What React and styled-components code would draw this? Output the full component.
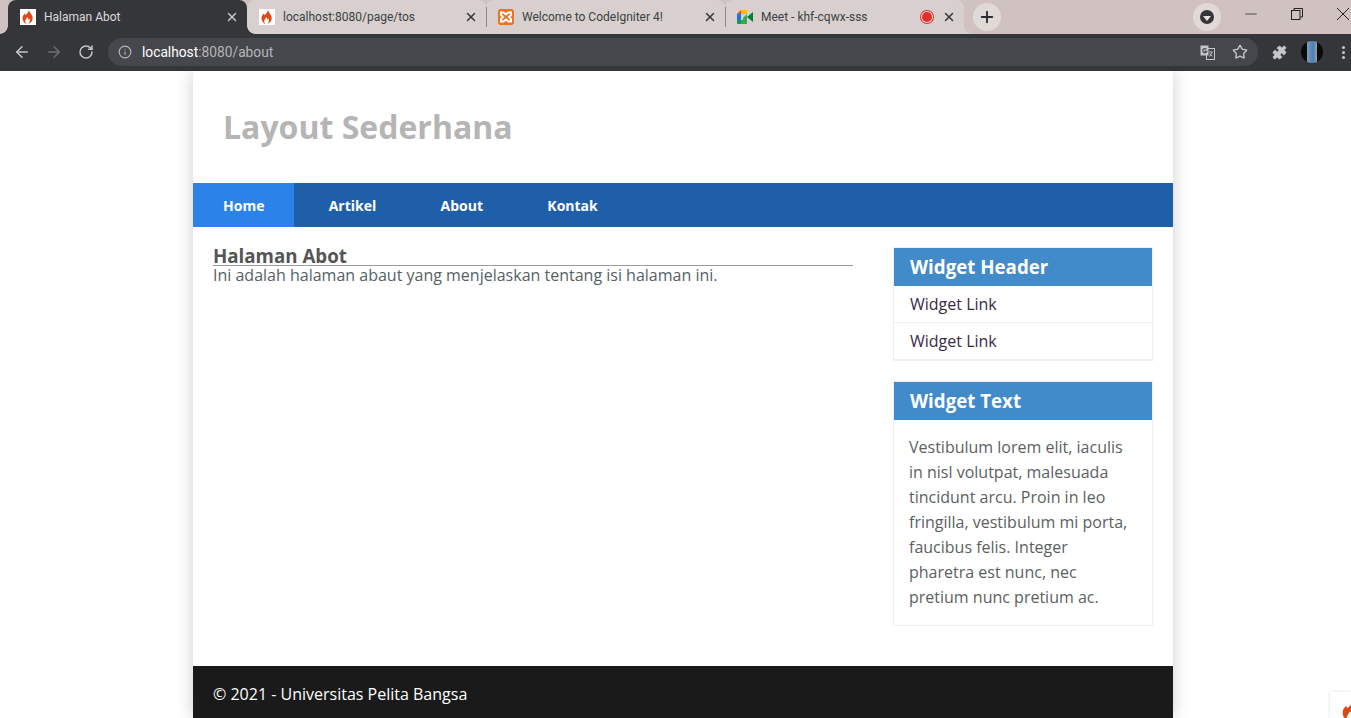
import React from "react";
import styled, { createGlobalStyle } from "styled-components";
import { ArrowLeft, ArrowRight, RotateCw, Info, Star, X, Plus, Minus, Puzzle } from "lucide-react";

const GlobalStyle = createGlobalStyle`
  html, body {
    margin: 0;
    padding: 0;
    height: 100%;
    overflow: hidden;
    background: #fff;
    font-family: "Open Sans", sans-serif;
  }
  * { box-sizing: border-box; }
`;

const Window = styled.div`
  position: relative;
  width: 1351px;
  height: 718px;
  overflow: hidden;
  display: flex;
  flex-direction: column;
`;

const TabStrip = styled.div`
  height: 34px;
  flex: none;
  display: flex;
  align-items: flex-end;
  padding-left: 8px;
  background: #cfc2c1;
`;

const Tab = styled.div`
  position: relative;
  z-index: ${(p) => (p.$active ? 2 : 0)};
  width: 239px;
  height: 34px;
  flex: none;
  display: flex;
  align-items: center;
  padding: 0 8px 0 12px;
  gap: 8px;
  border-radius: 8px 8px 0 0;
  background: ${(p) => (p.$active ? "#35363a" : "#d8d0ce")};
  color: ${(p) => (p.$active ? "#dcdcdc" : "#3c4043")};
  font-family: "Roboto", "Liberation Sans", sans-serif;
  font-size: 12px;

  &::after {
    content: "";
    position: absolute;
    right: -8px;
    bottom: 0;
    width: 8px;
    height: 8px;
    background: radial-gradient(circle at 100% 0, transparent 7.5px, ${(p) => (p.$active ? "#35363a" : "#d8d0ce")} 8px);
  }

  &::before {
    content: "";
    display: ${(p) => (p.$active ? "block" : "none")};
    position: absolute;
    left: -8px;
    bottom: 0;
    width: 8px;
    height: 8px;
    background: radial-gradient(circle at 0 0, transparent 7.5px, #35363a 8px);
  }
`;

const TabTitle = styled.span`
  flex: 1;
  white-space: nowrap;
`;

const TabDivider = styled.div`
  width: 1px;
  height: 20px;
  flex: none;
  z-index: 1;
  align-self: center;
  margin-right: -1px;
  background: #8f8a8a;
`;

const Favicon = styled.span`
  width: 16px;
  height: 16px;
  flex: none;
  display: flex;
  align-items: center;
  justify-content: center;
  background: ${(p) => p.$bg || "#fff"};
`;

const RecordDot = styled.span`
  width: 10px;
  height: 10px;
  flex: none;
  margin-right: 2px;
  border-radius: 50%;
  background: #e0302a;
  box-shadow: 0 0 0 1px #f3dedd, 0 0 0 2px #e0302a;
`;

const NewTab = styled.div`
  position: relative;
  z-index: 1;
  width: 28px;
  height: 28px;
  flex: none;
  margin: 0 0 3px 9px;
  border-radius: 50%;
  background: #e0d9d8;
  color: #2b2c30;
  display: flex;
  align-items: center;
  justify-content: center;
`;

const ProfileDrop = styled.div`
  width: 28px;
  height: 28px;
  flex: none;
  margin: 0 0 3px 192px;
  border-radius: 50%;
  background: #e0d9d8;
  display: flex;
  align-items: center;
  justify-content: center;
`;

const DropInner = styled.div`
  width: 14px;
  height: 14px;
  border-radius: 50%;
  background: #35363a;
  display: flex;
  align-items: center;
  justify-content: center;
  &::after {
    content: "";
    border-left: 4px solid transparent;
    border-right: 4px solid transparent;
    border-top: 5px solid #e8e3e3;
    margin-top: 2px;
  }
`;

const WindowButtons = styled.div`
  display: flex;
  align-self: flex-start;
  margin-left: 7px;
  color: #222;
`;

const WindowButton = styled.div`
  width: 46px;
  height: 28px;
  flex: none;
  display: flex;
  align-items: center;
  justify-content: center;
`;

const Toolbar = styled.div`
  height: 37px;
  flex: none;
  display: flex;
  align-items: center;
  background: #35363a;
  color: #c4c6ca;
  padding: 0 0 1px 9px;
`;

const NavIcon = styled.span`
  width: 26px;
  flex: none;
  margin-right: 6px;
  display: flex;
  justify-content: center;
  color: ${(p) => p.$color || "#c4c6ca"};
`;

const Omnibox = styled.div`
  width: 1150px;
  height: 28px;
  margin-left: 3px;
  flex: none;
  display: flex;
  align-items: center;
  padding: 0 10px;
  border-radius: 14px;
  background: #45474c;
  font-family: "Roboto", "Liberation Sans", sans-serif;
  font-size: 13.75px;
  color: #b4b6ba;
`;

const Url = styled.div`
  flex: 1;
  margin-left: 10px;
  b {
    font-weight: 400;
    color: #fff;
  }
`;

const OmniIcon = styled.span`
  display: flex;
  flex: none;
  margin-left: ${(p) => p.$gap || 14}px;
  color: #c4c6ca;
`;

const Avatar = styled.div`
  width: 22px;
  height: 22px;
  flex: none;
  margin: 0 19px 0 14px;
  border-radius: 50%;
  background: linear-gradient(90deg, #0a0a0a 28%, #7f9fb0 28%, #4d7bc0 55%, #8fa58e 72%, #0a0a0a 72%);
`;

const MoreDots = styled.div`
  width: 3px;
  height: 3px;
  flex: none;
  border-radius: 50%;
  background: #c4c6ca;
  box-shadow: 0 -5px 0 #c4c6ca, 0 5px 0 #c4c6ca;
`;

const Viewport = styled.div`
  flex: 1;
  overflow: hidden;
  background: #fff;
`;

const Container = styled.div`
  width: 980px;
  margin-left: 193px;
  height: 647px;
  display: flex;
  flex-direction: column;
  background: #fff;
  box-shadow: 0 0 16px rgba(0, 0, 0, 0.2);
`;

const Header = styled.header`
  height: 112px;
  flex: none;
  padding: 33px 30px 0;
`;

const SiteTitle = styled.h1`
  margin: 0;
  font-size: 32px;
  line-height: 46px;
  font-weight: 700;
  color: #b5b5b5;
`;

const Nav = styled.nav`
  height: 44px;
  flex: none;
  display: flex;
  gap: 4.3px;
  background: #1f5faa;
`;

const NavLink = styled.a`
  padding: 0 30px;
  display: flex;
  align-items: center;
  font-size: 14px;
  font-weight: 700;
  color: #fff;
  background: ${(p) => (p.$active ? "#2b83ea" : "transparent")};
`;

const Body = styled.div`
  flex: 1;
  display: flex;
  justify-content: space-between;
  padding: 20px 20px 0;
`;

const Main = styled.main`
  width: 640px;
`;

const PageTitle = styled.h2`
  margin: 0;
  font-size: 18.72px;
  line-height: 18px;
  font-weight: 700;
  color: #555;
  border-bottom: 1px solid #999;
`;

const PageText = styled.p`
  margin: 0;
  font-size: 16px;
  line-height: 18px;
  color: #555f66;
`;

const Aside = styled.aside`
  width: 260px;
  display: flex;
  flex-direction: column;
  gap: 20px;
`;

const Widget = styled.section`
  border: 1px solid #eee;
  border-bottom-width: ${(p) => p.$bottom || 1}px;
`;

const WidgetHead = styled.h3`
  margin: 0;
  height: 38px;
  padding: 0 16px 2px;
  display: flex;
  align-items: center;
  background: #428bca;
  color: #fff;
  font-size: 18.72px;
  font-weight: 700;
`;

const WidgetLink = styled.a`
  display: flex;
  align-items: center;
  height: 36px;
  padding: 0 16px;
  font-size: 16px;
  color: #3b2a45;
  & + & {
    height: 37px;
    border-top: 1px solid #eee;
  }
`;

const WidgetBody = styled.p`
  margin: 0;
  padding: 15px;
  font-size: 16px;
  line-height: 25px;
  color: #5c5f62;
`;

const Footer = styled.footer`
  height: 52px;
  flex: none;
  padding: 4px 20px 0;
  display: flex;
  align-items: center;
  background: #1a1a1a;
  color: #fff;
  font-size: 16px;
`;

const DebugToggle = styled.div`
  position: absolute;
  left: 1330px;
  top: 692px;
  width: 21px;
  height: 26px;
  overflow: hidden;
  padding: 7px 0 0 9px;
  background: #fff;
  box-shadow: 0 0 3px rgba(0, 0, 0, 0.15);
`;

const Flame = ({ size = 16 }) => (
  <svg width={size} height={size} viewBox="0 0 16 16" style={{ flex: "none" }}>
    <path
      fill="#dd4814"
      d="M8.600 0.600c.5 2.400-1 3.600-2.400 5C5.400 6.300 4.800 5.600 5 4.400 3.300 5.700 2.300 7.500 2.500 9.600c.2 2.900 2.300 4.900 4.300 5.700-1.200-1-1.900-2.400-1.500-3.700.3-1.200 1.500-2 2-3.500 1 1 1.100 1.900 1 2.600.7-.2 1.100-.8 1.200-1.500.8 1.700.5 4.200-1.300 5.700 2.400-.7 4.500-2.700 4.500-5.600 0-3.300-2.900-5.300-4.100-8.700z"
    />
  </svg>
);

const XamppIcon = () => (
  <svg width="16" height="16" viewBox="0 0 16 16">
    <rect width="16" height="16" rx="2" fill="#e8742a" />
    <path
      fill="none"
      stroke="#fff"
      strokeWidth="2"
      d="M3 3.500h2.500L8 5.500l2.500-2h2.500V6L11 8l2 2v2.500h-2.500L8 10.500l-2.500 2H3V10l2-2-2-2z"
    />
  </svg>
);

const MeetIcon = () => (
  <svg width="16" height="14" viewBox="0 0 16 14">
    <path fill="#fbbc04" d="M4 0h6v4H4z" />
    <path fill="#ea4335" d="M4 0v4H0z" />
    <path fill="#1a73e8" d="M0 4h4v6H0z" />
    <path fill="#0f9d58" d="M0 10h4v4H1a1 1 0 0 1-1-1z" />
    <path fill="#34a853" d="M4 10h6v4H4zM10 4v6H6V8z" />
    <path fill="#00832d" d="M10 7l6-5v10z" />
  </svg>
);

const TranslateIcon = () => (
  <svg width="15" height="15" viewBox="0 0 15 15">
    <rect x="0.500" y="0.500" width="8" height="10" fill="#c4c6ca" />
    <rect x="6.500" y="3.500" width="8" height="11" fill="none" stroke="#c4c6ca" />
    <path stroke="#45474c" strokeWidth="1.200" fill="none" d="M6.300 4.300a2 2 0 1 0 .4 2H4.600" />
    <path stroke="#c4c6ca" fill="none" d="M9 7h3.500M12 7c-.4 2-1.400 3.400-2.800 4.300M9.800 8.500c.5 1.100 1.400 2.100 2.500 2.700" />
  </svg>
);

const RestoreIcon = () => (
  <svg width="12" height="12" viewBox="0 0 12 12" fill="none" stroke="#222">
    <rect x="0.500" y="2.500" width="8.500" height="9" />
    <path d="M3 2.500V.5h8.500V9H9" />
  </svg>
);

const CloseThin = () => (
  <svg width="14" height="14" viewBox="0 0 14 14" stroke="#222" fill="none">
    <path d="M1 1l12 12M13 1L1 13" />
  </svg>
);

const links = ["Home", "Artikel", "About", "Kontak"];

export default function App() {
  return (
    <Window>
      <GlobalStyle />
      <TabStrip>
        <Tab $active>
          <Favicon><Flame /></Favicon>
          <TabTitle>Halaman Abot</TabTitle>
          <X size={14} strokeWidth={2.5} color="#c4c6ca" />
        </Tab>
        <Tab>
          <Favicon><Flame /></Favicon>
          <TabTitle>localhost:8080/page/tos</TabTitle>
          <X size={14} strokeWidth={2.5} color="#35363a" />
        </Tab>
        <TabDivider />
        <Tab>
          <Favicon><XamppIcon /></Favicon>
          <TabTitle>Welcome to CodeIgniter 4!</TabTitle>
          <X size={14} strokeWidth={2.5} color="#35363a" />
        </Tab>
        <TabDivider />
        <Tab>
          <Favicon $bg="transparent"><MeetIcon /></Favicon>
          <TabTitle>Meet - khf-cqwx-sss</TabTitle>
          <RecordDot />
          <X size={14} strokeWidth={2.5} color="#35363a" />
        </Tab>
        <NewTab><Plus size={18} strokeWidth={2.5} /></NewTab>
        <ProfileDrop><DropInner /></ProfileDrop>
        <WindowButtons>
          <WindowButton><Minus size={18} strokeWidth={1} color="#222" /></WindowButton>
          <WindowButton><RestoreIcon /></WindowButton>
          <WindowButton><CloseThin /></WindowButton>
        </WindowButtons>
      </TabStrip>
      <Toolbar>
        <NavIcon><ArrowLeft size={18} strokeWidth={2} /></NavIcon>
        <NavIcon $color="#6f7073"><ArrowRight size={18} strokeWidth={2} /></NavIcon>
        <NavIcon><RotateCw size={16} strokeWidth={2.2} /></NavIcon>
        <Omnibox>
          <Info size={14} strokeWidth={2} />
          <Url><b>localhost</b>:8080/about</Url>
          <OmniIcon><TranslateIcon /></OmniIcon>
          <OmniIcon $gap={17}><Star size={16} strokeWidth={2} /></OmniIcon>
        </Omnibox>
        <OmniIcon><Puzzle size={15} fill="#c4c6ca" strokeWidth={1.5} /></OmniIcon>
        <Avatar />
        <MoreDots />
      </Toolbar>
      <Viewport>
        <Container>
          <Header>
            <SiteTitle>Layout Sederhana</SiteTitle>
          </Header>
          <Nav>
            {links.map((link, i) => (
              <NavLink key={link} $active={i === 0}>{link}</NavLink>
            ))}
          </Nav>
          <Body>
            <Main>
              <PageTitle>Halaman Abot</PageTitle>
              <PageText>Ini adalah halaman abaut yang menjelaskan tentang isi halaman ini.</PageText>
            </Main>
            <Aside>
              <Widget $bottom={2}>
                <WidgetHead>Widget Header</WidgetHead>
                <WidgetLink>Widget Link</WidgetLink>
                <WidgetLink>Widget Link</WidgetLink>
              </Widget>
              <Widget>
                <WidgetHead>Widget Text</WidgetHead>
                <WidgetBody>
                  Vestibulum lorem elit, iaculis in nisl volutpat, malesuada tincidunt arcu. Proin in leo
                  fringilla, vestibulum mi porta, faucibus felis. Integer pharetra est nunc, nec pretium
                  nunc pretium ac.
                </WidgetBody>
              </Widget>
            </Aside>
          </Body>
          <Footer>© 2021 - Universitas Pelita Bangsa</Footer>
        </Container>
      </Viewport>
      <DebugToggle><Flame size={24} /></DebugToggle>
    </Window>
  );
}
